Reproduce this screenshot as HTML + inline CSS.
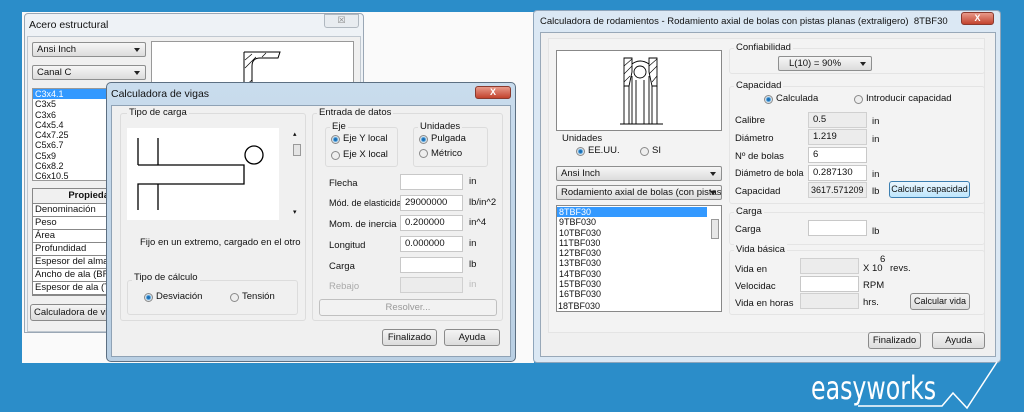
<!DOCTYPE html>
<html><head><meta charset="utf-8"><style>
*{box-sizing:border-box;margin:0;padding:0}
body{width:1024px;height:412px;overflow:hidden;background:#2b8dc9;font-family:"Liberation Sans",sans-serif;font-size:9.5px;color:#111;position:relative}
.a{position:absolute}
.win{position:absolute;background:#f0f0f0;border:1px solid #7a8a9a}
.grp{position:absolute;border:1px solid #dcdcdc;border-radius:3px}
.gl{position:absolute;background:#f0f0f0;padding:0 2px;top:-7px;left:6px;font-size:9.5px;white-space:nowrap}
.cb{position:absolute;height:15px;border:1px solid #8e8f8f;border-radius:2px;background:linear-gradient(#f6f6f6,#dcdcdc);padding-left:4px;line-height:13px;font-size:9.5px;white-space:nowrap;overflow:hidden}
.cb:after{content:"";position:absolute;right:5px;top:5px;border:3px solid transparent;border-top:4px solid #222}
.in{position:absolute;height:16px;background:#fff;border:1px solid #c8c8c8;font-size:9.5px;padding-left:4px;line-height:14px;white-space:nowrap;overflow:hidden}
.dis{background:#ececec;border-color:#d0d0d0}
.btn{position:absolute;height:17px;border:1px solid #8a8a8a;border-radius:3px;background:linear-gradient(#f4f4f4,#dcdcdc);text-align:center;line-height:15px;font-size:9.5px;white-space:nowrap;overflow:hidden}
.rb{position:absolute;width:9px;height:9px;border-radius:50%;border:1px solid #8a8a8a;background:#eee}
.rb.on:after{content:"";position:absolute;left:2px;top:2px;width:3px;height:3px;border-radius:50%;background:#1c6fb5;box-shadow:0 0 1px 1px #3b95d8}
.t{position:absolute;white-space:nowrap}
.lst div{height:10.3px;line-height:10px;font-size:9px;padding-left:2px;white-space:nowrap;overflow:hidden}
.tb div{height:13px;border-bottom:1px solid #888;padding-left:2px;white-space:nowrap;overflow:hidden;line-height:12px}
.close{position:absolute;height:13px;border-radius:3px;background:linear-gradient(#e89a8a,#c2432e);border:1px solid #8a3a2e;color:#fff;text-align:center;font-size:9px;line-height:11px;font-weight:bold}
</style></head><body>

<div class="a" style="left:22px;top:12px;width:512px;height:351px;background:#fafafa"></div>

<!-- Acero estructural -->
<div class="win" style="left:24px;top:13px;width:340px;height:320px;background:#eef2f6;border-color:#9aa7b5;border-radius:4px 4px 0 0">
 <div class="t" style="left:4px;top:5px;font-size:10.5px">Acero estructural</div>
 <div class="a" style="left:299px;top:0;width:35px;height:14px;border:1px solid #b0b8c0;border-radius:0 0 3px 3px;background:#e8ecf0;color:#888;text-align:center;font-size:9px">☒</div>
 <div class="a" style="left:2px;top:22px;width:334px;height:296px;background:#f0f0f0;border:1px solid #c0c8d0"></div>
</div>
<div class="cb" style="left:32px;top:42px;width:114px">Ansi Inch</div>
<div class="cb" style="left:32px;top:65px;width:114px">Canal C</div>
<div class="a" style="left:151px;top:41px;width:203px;height:60px;background:#fff;border:1px solid #999"></div>
<svg class="a" style="left:240px;top:50px" width="50" height="50"><path d="M4 2 V50 M4 2 H40 L38 8 H20 Q12 8 12 16 V50" fill="none" stroke="#000"/><path d="M5 10 L12 4 M5 18 L16 7 M22 7 L26 3 M5 36 L12 30" stroke="#000" stroke-width=".7"/></svg>
<div class="a lst" style="left:32px;top:88px;width:80px;height:93px;background:#fff;border:1px solid #999;overflow:hidden">
<div style="background:#3399ff;color:#fff">C3x4.1</div><div>C3x5</div><div>C3x6</div><div>C4x5.4</div><div>C4x7.25</div><div>C5x6.7</div><div>C5x9</div><div>C6x8.2</div><div>C6x10.5</div></div>
<div class="a tb" style="left:32px;top:188px;width:80px;height:108px;background:#fff;border:1px solid #888;font-size:9.5px;overflow:hidden">
 <div style="height:15px;background:#f0f0f0;text-align:right;font-weight:bold;padding-right:2px;line-height:14px">Propieda</div>
 <div>Denominación</div><div>Peso</div><div>Área</div><div>Profundidad</div><div>Espesor del alma (</div><div>Ancho de ala (BF)</div><div>Espesor de ala (TF</div>
</div>
<div class="btn" style="left:30px;top:304px;width:82px;text-align:left;padding-left:3px">Calculadora de vig</div>

<!-- Calculadora de vigas -->
<div class="win" style="left:106px;top:82px;width:410px;height:280px;background:linear-gradient(#c9dced,#b9cfe3);border-color:#5c6f82;border-radius:5px">
 <div class="t" style="left:4px;top:5px;font-size:10.5px">Calculadora de vigas</div>
 <div class="close" style="left:368px;top:3px;width:36px">X</div>
 <div class="a" style="left:4px;top:22px;width:400px;height:252px;background:#f0f0f0;border:1px solid #8fa2b5"></div>
</div>
<div class="grp" style="left:120px;top:113px;width:186px;height:208px"><div class="gl">Tipo de carga</div></div>
<div class="a" style="left:127px;top:128px;width:152px;height:92px;background:#fff"></div>
<svg class="a" style="left:127px;top:128px" width="152" height="92"><g fill="none" stroke="#000" stroke-width="1.3"><path d="M11 10 V37 M31 10 V37 M11 37 H117 V56 H11 V82 M31 56 V82"/><circle cx="127" cy="27" r="9"/></g></svg>
<div class="a" style="left:291px;top:130px;width:12px;height:90px"><div class="t" style="left:2px;top:0;font-size:7px">▴</div><div class="a" style="left:2px;top:14px;width:8px;height:12px;border:1px solid #999;background:#e4e4e4"></div><div class="t" style="left:2px;top:78px;font-size:7px">▾</div></div>
<div class="t" style="left:140px;top:237px">Fijo en un extremo, cargado en el otro</div>
<div class="grp" style="left:127px;top:280px;width:171px;height:35px"><div class="gl" style="left:4px;top:-9px">Tipo de cálculo</div></div>
<div class="rb on" style="left:144px;top:293px"></div><div class="t" style="left:156px;top:291px">Desviación</div>
<div class="rb" style="left:230px;top:293px"></div><div class="t" style="left:242px;top:291px">Tensión</div>

<div class="grp" style="left:312px;top:113px;width:191px;height:208px"><div class="gl" style="left:4px">Entrada de datos</div></div>
<div class="grp" style="left:325px;top:127px;width:73px;height:40px"><div class="gl" style="left:4px">Eje</div></div>
<div class="rb on" style="left:331px;top:135px"></div><div class="t" style="left:343px;top:133px">Eje Y local</div>
<div class="rb" style="left:331px;top:151px"></div><div class="t" style="left:343px;top:149px">Eje X local</div>
<div class="grp" style="left:413px;top:127px;width:75px;height:40px"><div class="gl" style="left:4px">Unidades</div></div>
<div class="rb on" style="left:419px;top:135px"></div><div class="t" style="left:431px;top:133px">Pulgada</div>
<div class="rb" style="left:419px;top:149px"></div><div class="t" style="left:431px;top:148px">Métrico</div>
<div class="t" style="left:329px;top:178px">Flecha</div><div class="in" style="left:400px;top:174px;width:63px"></div><div class="t" style="left:469px;top:176px">in</div>
<div class="t" style="left:329px;top:198px;font-size:9px">Mód. de elasticidad</div><div class="in" style="left:400px;top:195px;width:63px">29000000</div><div class="t" style="left:469px;top:197px">lb/in^2</div>
<div class="t" style="left:329px;top:219px">Mom. de inercia</div><div class="in" style="left:400px;top:215px;width:63px">0.200000</div><div class="t" style="left:469px;top:217px">in^4</div>
<div class="t" style="left:329px;top:240px">Longitud</div><div class="in" style="left:400px;top:236px;width:63px">0.000000</div><div class="t" style="left:469px;top:238px">in</div>
<div class="t" style="left:329px;top:261px">Carga</div><div class="in" style="left:400px;top:257px;width:63px"></div><div class="t" style="left:469px;top:259px">lb</div>
<div class="t" style="left:329px;top:281px;color:#aaa">Rebajo</div><div class="in dis" style="left:400px;top:277px;width:63px"></div><div class="t" style="left:469px;top:279px;color:#bbb">in</div>
<div class="btn" style="left:319px;top:299px;width:178px;color:#999;border-color:#c0c0c0;background:#f2f2f2">Resolver...</div>
<div class="btn" style="left:382px;top:329px;width:55px">Finalizado</div>
<div class="btn" style="left:444px;top:329px;width:56px">Ayuda</div>

<!-- Right window -->
<div class="win" style="left:533px;top:10px;width:468px;height:353px;background:#dbe8f4;border-color:#8ea5bb;border-radius:4px">
 <div class="t" style="left:6px;top:5px;font-size:9.5px">Calculadora de rodamientos - Rodamiento axial de bolas con pistas planas (extraligero)&nbsp; 8TBF30</div>
 <div class="close" style="left:427px;top:1px;width:33px">X</div>
 <div class="a" style="left:6px;top:21px;width:456px;height:325px;background:#f0f0f0;border:1px solid #98a8b8"></div>
</div>
<div class="a" style="left:548px;top:38px;width:437px;height:295px;background:#f3f3f3;border:1px solid #e4e4e4"></div>
<div class="a" style="left:556px;top:50px;width:166px;height:81px;background:#fff;border:1px solid #888"></div>
<svg class="a" style="left:618px;top:54px" width="50" height="75"><g fill="none" stroke="#000" stroke-width=".9"><path d="M6 4 H14 V18 L11 32 H6 Z M31 4 H39 V32 H34 L31 18 Z M14 10 Q22 4 31 10"/><circle cx="22" cy="18" r="6"/><path d="M6 32 V70 M11 32 V70 M14 22 V70 M18 26 V70 M26 26 V70 M31 22 V70 M34 32 V70 M39 32 V70 M2 70 H45"/></g><path d="M6 12 L14 5 M6 20 L14 12 M6 28 L12 22 M31 12 L39 5 M31 20 L39 12 M34 28 L39 22" stroke="#000" stroke-width=".6"/></svg>
<div class="t" style="left:562px;top:133px">Unidades</div>
<div class="rb on" style="left:576px;top:147px"></div><div class="t" style="left:588px;top:145px">EE.UU.</div>
<div class="rb" style="left:640px;top:147px"></div><div class="t" style="left:652px;top:145px">SI</div>
<div class="cb" style="left:556px;top:166px;width:166px">Ansi Inch</div>
<div class="cb" style="left:556px;top:185px;width:166px;padding-right:16px">Rodamiento axial de bolas (con pistas pl</div>
<div class="a lst" style="left:556px;top:205px;width:166px;height:107px;background:#fff;border:1px solid #888;padding-top:1px;overflow:hidden">
<div style="background:#3399ff;color:#fff;width:150px">8TBF30</div><div>9TBF030</div><div>10TBF030</div><div>11TBF030</div><div>12TBF030</div><div>13TBF030</div><div>14TBF030</div><div>15TBF030</div><div>16TBF030</div><div>17TBF030</div></div>
<div class="t" style="left:558px;top:301px;font-size:9px;background:#fff;width:140px">18TBF030</div>
<div class="a" style="left:711px;top:219px;width:8px;height:20px;border:1px solid #999;background:#e8e8e8"></div>

<div class="grp" style="left:729px;top:48px;width:256px;height:26px;border-color:#e4e4e4"><div class="gl" style="left:4px;background:#f3f3f3">Confiabilidad</div></div>
<div class="cb" style="left:778px;top:56px;width:94px;padding-left:10px">L(10) = 90%</div>
<div class="grp" style="left:729px;top:86px;width:256px;height:118px;border-color:#e4e4e4"><div class="gl" style="left:4px;background:#f3f3f3">Capacidad</div></div>
<div class="rb on" style="left:764px;top:95px"></div><div class="t" style="left:776px;top:93px">Calculada</div>
<div class="rb" style="left:854px;top:95px"></div><div class="t" style="left:866px;top:93px">Introducir capacidad</div>
<div class="t" style="left:735px;top:115px">Calibre</div><div class="in dis" style="left:808px;top:112px;width:59px">0.5</div><div class="t" style="left:872px;top:116px">in</div>
<div class="t" style="left:735px;top:133px">Diámetro</div><div class="in dis" style="left:808px;top:129px;width:59px">1.219</div><div class="t" style="left:872px;top:134px">in</div>
<div class="t" style="left:735px;top:151px">Nº de bolas</div><div class="in" style="left:808px;top:147px;width:59px">6</div>
<div class="t" style="left:735px;top:168px;font-size:9px">Diámetro de bola</div><div class="in" style="left:808px;top:165px;width:59px">0.287130</div><div class="t" style="left:872px;top:169px">in</div>
<div class="t" style="left:735px;top:186px">Capacidad</div><div class="in dis" style="left:808px;top:182px;width:59px;font-size:9px;padding-left:2px">3617.571209</div><div class="t" style="left:872px;top:186px">lb</div>
<div class="btn" style="left:889px;top:181px;width:81px;font-size:9px;border-color:#3c7fb1;background:linear-gradient(#eaf6fd,#bee6fd)">Calcular capacidad</div>
<div class="grp" style="left:729px;top:212px;width:256px;height:33px;border-color:#e4e4e4"><div class="gl" style="left:4px;background:#f3f3f3">Carga</div></div>
<div class="t" style="left:735px;top:224px">Carga</div><div class="in" style="left:808px;top:220px;width:59px"></div><div class="t" style="left:872px;top:226px">lb</div>
<div class="grp" style="left:729px;top:250px;width:256px;height:65px;border-color:#e4e4e4"><div class="gl" style="left:4px;background:#f3f3f3">Vida básica</div></div>
<div class="t" style="left:735px;top:264px">Vida en</div><div class="in dis" style="left:800px;top:258px;width:59px"></div><div class="t" style="left:863px;top:263px">X 10</div><div class="t" style="left:880px;top:254px">6</div><div class="t" style="left:890px;top:263px">revs.</div>
<div class="t" style="left:735px;top:281px">Velocidac</div><div class="in" style="left:800px;top:276px;width:59px"></div><div class="t" style="left:863px;top:280px">RPM</div>
<div class="t" style="left:735px;top:298px">Vida en horas</div><div class="in dis" style="left:800px;top:293px;width:59px"></div><div class="t" style="left:863px;top:297px">hrs.</div>
<div class="btn" style="left:910px;top:293px;width:60px;font-size:9px">Calcular vida</div>
<div class="btn" style="left:868px;top:332px;width:53px">Finalizado</div>
<div class="btn" style="left:932px;top:332px;width:53px">Ayuda</div>

<!-- logo -->
<div class="t" style="left:811px;top:370px;font-family:'DejaVu Sans',sans-serif;font-size:32px;color:#fff;transform:scaleX(0.74);transform-origin:left top;line-height:36px">easyworks</div>
<svg class="a" style="left:850px;top:360px" width="160" height="52"><path d="M8 46 H92 L103 33 L117 48 L147 2" fill="none" stroke="#fff" stroke-width="1.5"/></svg>
</body></html>
